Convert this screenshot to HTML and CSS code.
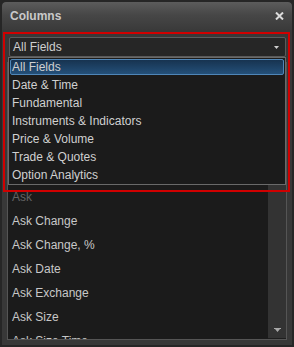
FILE: index.html
```html
<!DOCTYPE html>
<html>
<head>
<meta charset="utf-8">
<link rel="stylesheet" href="styles.css">
</head>
<body>
<div class="window">
  <div class="titlebar">
    <span class="title">Columns</span>
    <span class="close"><svg width="9" height="8" viewBox="0 0 9 8"><path d="M1 0.5 L8 7.5 M8 0.5 L1 7.5" stroke="#dcdcdc" stroke-width="2"/></svg></span>
  </div>
  <div class="content">
    <div class="select">
      <span class="select-text">All Fields</span>
      <svg class="caret" width="5" height="3" viewBox="0 0 5 3"><path d="M0 0 H5 L2.5 3 Z" fill="#cfcfcf"/></svg>
    </div>
    <div class="list">
      <ul class="items">
        <li class="item disabled">Ask</li>
        <li class="item">Ask Change</li>
        <li class="item">Ask Change, %</li>
        <li class="item">Ask Date</li>
        <li class="item">Ask Exchange</li>
        <li class="item">Ask Size</li>
        <li class="item">Ask Size Time</li>
      </ul>
      <div class="scrollbar">
        <svg class="down" width="7" height="4" viewBox="0 0 7 4"><path d="M0 0 H7 V1 H6 L3.5 4 L1 1 H0 Z" fill="#a8a8a8"/></svg>
      </div>
    </div>
    <ul class="popup">
      <li class="opt"><span class="opt-in selected">All Fields</span></li>
      <li class="opt"><span class="opt-in">Date &amp; Time</span></li>
      <li class="opt"><span class="opt-in">Fundamental</span></li>
      <li class="opt"><span class="opt-in">Instruments &amp; Indicators</span></li>
      <li class="opt"><span class="opt-in">Price &amp; Volume</span></li>
      <li class="opt"><span class="opt-in">Trade &amp; Quotes</span></li>
      <li class="opt"><span class="opt-in">Option Analytics</span></li>
    </ul>
    <div class="annot"></div>
  </div>
</div>
</body>
</html>
```

FILE: styles.css
```css
* { box-sizing: border-box; }
html, body { margin: 0; padding: 0; }
body {
  background: #262626;
  font-family: "Liberation Sans", Arial, sans-serif;
  font-size: 12px;
  width: 294px;
  height: 347px;
  overflow: hidden;
}
.window {
  width: 294px;
  height: 347px;
  border: 2px solid #262626;
  border-radius: 6px 6px 0 0;
  background: #383838;
  display: flex;
  flex-direction: column;
  overflow: hidden;
}
.titlebar {
  height: 28px;
  flex: none;
  display: flex;
  align-items: center;
  justify-content: space-between;
  padding: 0 8px 0 8px;
  background: linear-gradient(#5c5c5c, #474747 45%, #3a3a3a);
  border-radius: 4px 4px 0 0;
}
.title {
  color: #c9c9c9;
  font-weight: bold;
  font-size: 12px;
  line-height: 28px;
}
.close {
  display: flex;
  width: 9px;
  height: 8px;
  margin-top: -1px;
}
.content {
  position: relative;
  flex: 1;
  min-height: 0;
  display: flex;
  flex-direction: column;
  padding: 7px 5px 5px 5px;
}
.select {
  height: 20px;
  margin: 0 1px 0 2px;
  border: 1px solid #5a5a5a;
  border-radius: 2px;
  background: #262626;
  display: flex;
  align-items: center;
  justify-content: space-between;
  padding: 0 6px 0 3px;
  flex: none;
}
.select-text {
  color: #cfcfcf;
  line-height: 18px;
}
.caret { display: block; margin-top: 1px; }
.list {
  margin-top: 5px;
  flex: 1;
  min-height: 0;
  border: 1px solid #555;
  background: #1b1b1b;
  display: flex;
  overflow: hidden;
}
.items {
  list-style: none;
  margin: 0;
  padding: 122px 0 0 4px;
  flex: 1;
  overflow: hidden;
}
.item {
  height: 24px;
  line-height: 24px;
  color: #c8c8c8;
  white-space: nowrap;
}
.item.disabled { color: #636363; }
.scrollbar {
  width: 18px;
  flex: none;
  background: #333;
  border-bottom: 1px solid #1e1e1e;
  display: flex;
  align-items: flex-end;
  justify-content: center;
  padding-bottom: 6px;
}
.down { display: block; }
.popup {
  position: absolute;
  left: 6px;
  top: 27px;
  width: 278px;
  margin: 0;
  padding: 0;
  list-style: none;
  background: #1b1b1b;
  border: 1px solid #6a6a6a;
}
.opt {
  height: 18px;
  padding: 1px;
}
.opt-in {
  display: block;
  height: 16px;
  line-height: 14px;
  padding-left: 1px;
  border: 1px solid transparent;
  border-radius: 2px;
  color: #d0d0d0;
  white-space: nowrap;
}
.opt-in.selected {
  border-color: #4f86b8;
  background: linear-gradient(#173350, #245079);
}
.annot {
  position: absolute;
  left: 1px;
  top: 2px;
  width: 287px;
  height: 160px;
  border: 2px solid #d00000;
  pointer-events: none;
}
```
